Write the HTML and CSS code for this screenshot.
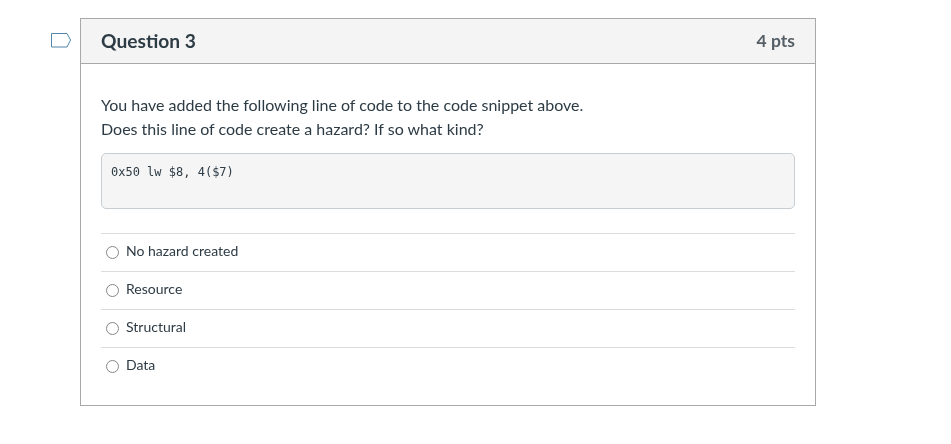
FILE: index.html
```html
<!DOCTYPE html>
<html lang="en">
<head>
<meta charset="utf-8">
<title>Question 3</title>
<link rel="stylesheet" href="styles.css">
</head>
<body>
<div class="page">
  <div class="flag">
    <svg width="22" height="17" viewBox="0 0 22 17"><path d="M1.5 1.5H17L20.6 8L17 15H1.5Z" fill="#fff" stroke="#4f86aa" stroke-width="1"/></svg>
  </div>
  <section class="card">
    <header class="head">
      <h2 class="title">Question 3</h2>
      <span class="pts">4 pts</span>
    </header>
    <div class="body">
      <p class="line">You have added the following line of code to the code snippet above.</p>
      <p class="line">Does this line of code create a hazard? If so what kind?</p>
      <pre class="code">0x50 lw $8, 4($7)</pre>
      <div class="answers">
        <div class="answer"><span class="radio"></span><span>No hazard created</span></div>
        <div class="answer"><span class="radio"></span><span>Resource</span></div>
        <div class="answer"><span class="radio"></span><span>Structural</span></div>
        <div class="answer"><span class="radio"></span><span>Data</span></div>
      </div>
    </div>
  </section>
</div>
</body>
</html>
```
FILE: styles.css
```css
* { box-sizing: border-box; }
html, body { margin: 0; padding: 0; background: #fff; }
body { font-family: Lato, "Liberation Sans", sans-serif; color: #2d3b45; overflow: hidden; }
.page { display: flex; align-items: flex-start; padding: 18px 0 0 50px; will-change: opacity; }
.flag { width: 30px; height: 46px; display: flex; align-items: center; padding-bottom: 2px; }
.flag svg { display: block; }
.card { width: 736px; height: 388px; border: 1px solid #a9a9a9; }
.head { height: 45px; background: #f4f4f4; border-bottom: 1px solid #a9a9a9; display: flex; align-items: center; justify-content: space-between; padding: 0 20px 1px; }
.title { margin: 0; font-size: 19.2px; font-weight: 700; color: #2d3b45; }
.pts { font-size: 17.5px; font-weight: 700; color: #565f66; }
.body { padding: 29px 20px 0; }
.line { margin: 0; font-size: 16px; line-height: 24px; height: 24px; }
.code { margin: 12px 0 0; height: 56px; background: #f5f5f5; border: 1px solid #c7cdd1; border-radius: 5px; padding: 11px 9px; font-family: "DejaVu Sans Mono", monospace; font-size: 12px; line-height: 14px; color: #2d3b45; }
.answers { margin-top: 24px; }
.answer { height: 38px; border-top: 1px solid #dcdcdc; display: flex; align-items: center; gap: 7px; padding: 0 0 4px 5px; font-size: 14px; color: #2d3b45; }
.radio { width: 13px; height: 13px; border: 1px solid #858585; border-radius: 50%; background: #fff; margin-top: 4px; }
```
